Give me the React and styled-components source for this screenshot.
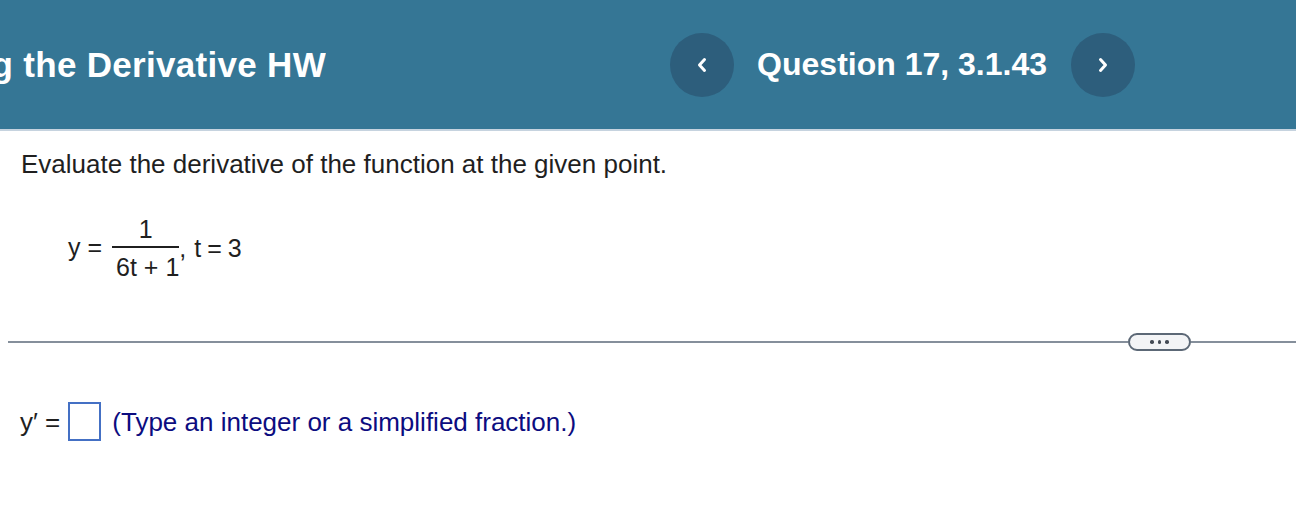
import React from 'react';
import styled, { createGlobalStyle } from 'styled-components';

const GlobalStyle = createGlobalStyle`
  html, body {
    margin: 0;
    padding: 0;
    background: #ffffff;
  }
  body {
    font-family: "Liberation Sans", Arial, Helvetica, sans-serif;
    color: #1f1f1f;
  }
`;

const Page = styled.div`
  width: 1296px;
  height: 532px;
  overflow: hidden;
  background: #fff;
`;

const Header = styled.header`
  display: flex;
  align-items: center;
  height: 129px;
  padding-right: 161px;
  background: #357695;
  border-bottom: 2px solid #c6d3df;
`;

const TitleClip = styled.div`
  display: flex;
  justify-content: flex-end;
  width: 326px;
  overflow: hidden;
  white-space: nowrap;
`;

const Title = styled.h1`
  margin: 0;
  font-size: 35px;
  font-weight: 700;
  letter-spacing: 0.3px;
  color: #fff;
  line-height: 40px;
`;

const Nav = styled.nav`
  display: flex;
  align-items: center;
  margin-left: auto;
  gap: 23px;
`;

const NavButton = styled.button`
  display: flex;
  align-items: center;
  justify-content: center;
  width: 64px;
  height: 64px;
  padding: 0;
  border: none;
  border-radius: 50%;
  background: #2d5e7c;
  cursor: pointer;
`;

const QuestionLabel = styled.div`
  font-size: 32px;
  font-weight: 700;
  color: #fff;
  line-height: 37px;
  margin-right: 1px;
`;

const Content = styled.main`
  padding: 18px 0 0 21px;
`;

const Prompt = styled.p`
  margin: 0;
  font-size: 26px;
  line-height: 30px;
  color: #1f1f1f;
`;

const MathRow = styled.div`
  display: flex;
  align-items: center;
  margin: 36px 0 0 47px;
  font-size: 25px;
  line-height: 25px;
  color: #1f1f1f;
  white-space: pre;
`;

const Lhs = styled.span`
  margin-right: 10px;
`;

const Fraction = styled.span`
  display: inline-flex;
  flex-direction: column;
  align-items: center;
  margin-top: 2px;
`;

const Numerator = styled.span`
  padding-bottom: 4px;
`;

const Bar = styled.span`
  align-self: stretch;
  height: 2px;
  background: #1f1f1f;
`;

const Denominator = styled.span`
  padding: 7px 0 0 4px;
`;

const Rest = styled.span`
  margin-top: 2px;
  word-spacing: -1px;
`;

const Comma = styled.span`
  margin-right: 8px;
`;

const SeparatorRow = styled.div`
  display: flex;
  align-items: center;
  margin: 53px 0 0 8px;
`;

const Rule = styled.div`
  flex: ${(p) => (p.$grow ? '1' : 'none')};
  width: ${(p) => (p.$grow ? 'auto' : '105px')};
  height: 2px;
  background: #858f9b;
`;

const MoreButton = styled.button`
  display: flex;
  align-items: center;
  justify-content: center;
  gap: 4px;
  box-sizing: border-box;
  width: 63px;
  height: 18px;
  padding: 0;
  border: 2px solid #5c6876;
  border-radius: 9px;
  background: #f3f4f6;
`;

const Dot = styled.span`
  width: 3.5px;
  height: 3.5px;
  border-radius: 50%;
  background: #444b55;
`;

const AnswerRow = styled.div`
  display: flex;
  align-items: center;
  margin: 51px 0 0 20px;
  font-size: 26px;
  line-height: 30px;
`;

const AnswerLabel = styled.span`
  color: #1f1f1f;
  white-space: pre;
  margin-right: 8px;
`;

const AnswerBox = styled.div`
  box-sizing: border-box;
  width: 33px;
  height: 39px;
  border: 2px solid #4470c4;
  background: #fff;
  margin-right: 11px;
`;

const Hint = styled.span`
  color: #0c0c80;
`;

const Chevron = ({ dir }) => (
  <svg width="12" height="16" viewBox="0 0 12 16">
    <polyline
      points={dir === 'left' ? '8.5,2.5 3.5,8 8.5,13.5' : '3.5,2.5 8.5,8 3.5,13.5'}
      fill="none"
      stroke="#fff"
      strokeWidth="3"
      strokeLinecap="round"
      strokeLinejoin="round"
    />
  </svg>
);

export default function App() {
  return (
    <Page>
      <GlobalStyle />
      <Header>
        <TitleClip>
          <Title>Using the Derivative HW</Title>
        </TitleClip>
        <Nav>
          <NavButton aria-label="Previous question">
            <Chevron dir="left" />
          </NavButton>
          <QuestionLabel>Question 17, 3.1.43</QuestionLabel>
          <NavButton aria-label="Next question">
            <Chevron dir="right" />
          </NavButton>
        </Nav>
      </Header>
      <Content>
        <Prompt>Evaluate the derivative of the function at the given point.</Prompt>
        <MathRow>
          <Lhs>y =</Lhs>
          <Fraction>
            <Numerator>1</Numerator>
            <Bar />
            <Denominator>6t + 1</Denominator>
          </Fraction>
          <Rest>
            <Comma>,</Comma>t = 3
          </Rest>
        </MathRow>
      </Content>
      <SeparatorRow>
        <Rule $grow />
        <MoreButton aria-label="More">
          <Dot />
          <Dot />
          <Dot />
        </MoreButton>
        <Rule />
      </SeparatorRow>
      <AnswerRow>
        <AnswerLabel>y′ =</AnswerLabel>
        <AnswerBox />
        <Hint>(Type an integer or a simplified fraction.)</Hint>
      </AnswerRow>
    </Page>
  );
}
